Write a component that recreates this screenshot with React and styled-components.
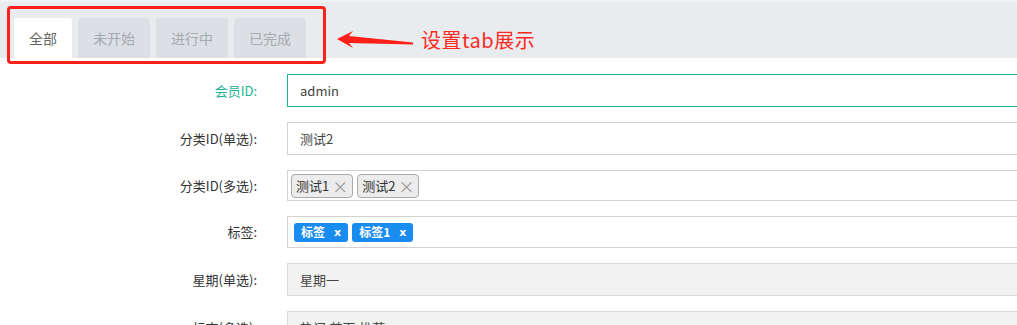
import React from "react";
import styled, { createGlobalStyle } from "styled-components";

const GlobalStyle = createGlobalStyle`
  html, body { margin: 0; padding: 0; background: #fff; overflow: hidden; }
  body {
    font-family: "Noto Sans CJK SC", "Noto Sans", sans-serif;
    font-size: 13px;
    color: #333;
  }
  * { box-sizing: border-box; }
`;

const Page = styled.div`
  width: 1060px;
  height: 325px;
`;

const Header = styled.div`
  position: relative;
  height: 58px;
  background: #e8ecef;
  border-top: 2px solid #f1f3f5;
  padding: 16px 0 0 14px;
`;

const TabList = styled.div`
  display: flex;
  gap: 6px;
  height: 40px;
`;

const Tab = styled.div`
  display: flex;
  align-items: center;
  justify-content: center;
  padding: 0 14px;
  width: ${(p) => (p.$active ? "58px" : "72px")};
  border-radius: 3px 3px 0 0;
  background: ${(p) => (p.$active ? "#ffffff" : "#dce0e4")};
  color: ${(p) => (p.$active ? "#666" : "#a3aab1")};
  font-size: 14px;
  line-height: 1;
`;

const RedBox = styled.div`
  position: absolute;
  left: 7px;
  top: 4px;
  width: 319px;
  height: 58px;
  border: 3px solid #ff2019;
  border-radius: 4px;
  pointer-events: none;
`;

const Callout = styled.div`
  position: absolute;
  left: 337px;
  top: 21px;
  display: flex;
  align-items: center;
  gap: 6px;
`;

const CalloutText = styled.span`
  color: #ff2a1f;
  font-size: 20px;
  line-height: 26px;
  padding-top: 4px;
  letter-spacing: 0.5px;
`;

const Form = styled.div`
  padding-top: 16px;
`;

const Row = styled.div`
  display: flex;
  align-items: center;
  margin-bottom: 15px;
`;

const Label = styled.div`
  width: 257px;
  text-align: right;
  font-size: 13px;
  line-height: 18px;
  color: ${(p) => (p.$focus ? "#1ab394" : "#333")};
`;

const Control = styled.div`
  margin-left: 30px;
  flex: 1;
  height: ${(p) => p.$h}px;
  display: flex;
  align-items: center;
  gap: 4px;
  padding: ${(p) => p.$pad || "0 12px"};
  border: 1px solid ${(p) => (p.$focus ? "#1ab394" : p.$readonly ? "#dcdcdc" : "#d2d2d2")};
  background: ${(p) => (p.$readonly ? "#f2f2f2" : "#fff")};
  color: #444;
  font-size: 13px;
  line-height: 1;
`;

const Choice = styled.span`
  display: inline-flex;
  align-items: center;
  height: 24px;
  padding: 0 4px 0 4px;
  border: 1px solid #aaa;
  border-radius: 4px;
  background: #ececec;
  color: #333;
  font-size: 13px;
`;

const ChoiceRemove = styled.span`
  margin-left: 3px;
  color: #999;
  font-size: 16px;
  line-height: 1;
`;

const TagBadge = styled.span`
  display: inline-flex;
  align-items: center;
  height: 19px;
  padding: 0 7px;
  border-radius: 3px;
  background: #1a8cf0;
  color: #fff;
  font-size: 12px;
  font-weight: bold;
`;

const TagX = styled.span`
  margin-left: 9px;
  font-family: "DejaVu Sans", sans-serif;
  font-size: 11px;
  font-weight: bold;
`;

const Arrow = () => (
  <svg width="78" height="20" viewBox="0 0 78 20">
    <polygon
      points="0,11 16,3 12,8 76,14.5 76,16.5 12,15 16,20"
      fill="#ff2019"
    />
  </svg>
);

export default function App() {
  return (
    <Page>
      <GlobalStyle />
      <Header>
        <TabList>
          <Tab $active>全部</Tab>
          <Tab>未开始</Tab>
          <Tab>进行中</Tab>
          <Tab>已完成</Tab>
        </TabList>
        <RedBox />
        <Callout>
          <Arrow />
          <CalloutText>设置tab展示</CalloutText>
        </Callout>
      </Header>
      <Form>
        <Row>
          <Label $focus>会员ID:</Label>
          <Control $h={33} $focus>admin</Control>
        </Row>
        <Row>
          <Label>分类ID(单选):</Label>
          <Control $h={33}>测试2</Control>
        </Row>
        <Row>
          <Label>分类ID(多选):</Label>
          <Control $h={31} $pad="0 3px">
            <Choice>
              测试1<ChoiceRemove>×</ChoiceRemove>
            </Choice>
            <Choice>
              测试2<ChoiceRemove>×</ChoiceRemove>
            </Choice>
          </Control>
        </Row>
        <Row>
          <Label>标签:</Label>
          <Control $h={32} $pad="0 6px">
            <TagBadge>
              标签<TagX>x</TagX>
            </TagBadge>
            <TagBadge>
              标签1<TagX>x</TagX>
            </TagBadge>
          </Control>
        </Row>
        <Row>
          <Label>星期(单选):</Label>
          <Control $h={33} $readonly>星期一</Control>
        </Row>
        <Row>
          <Label>标志(多选):</Label>
          <Control $h={33} $readonly>热门,首页,推荐</Control>
        </Row>
      </Form>
    </Page>
  );
}
